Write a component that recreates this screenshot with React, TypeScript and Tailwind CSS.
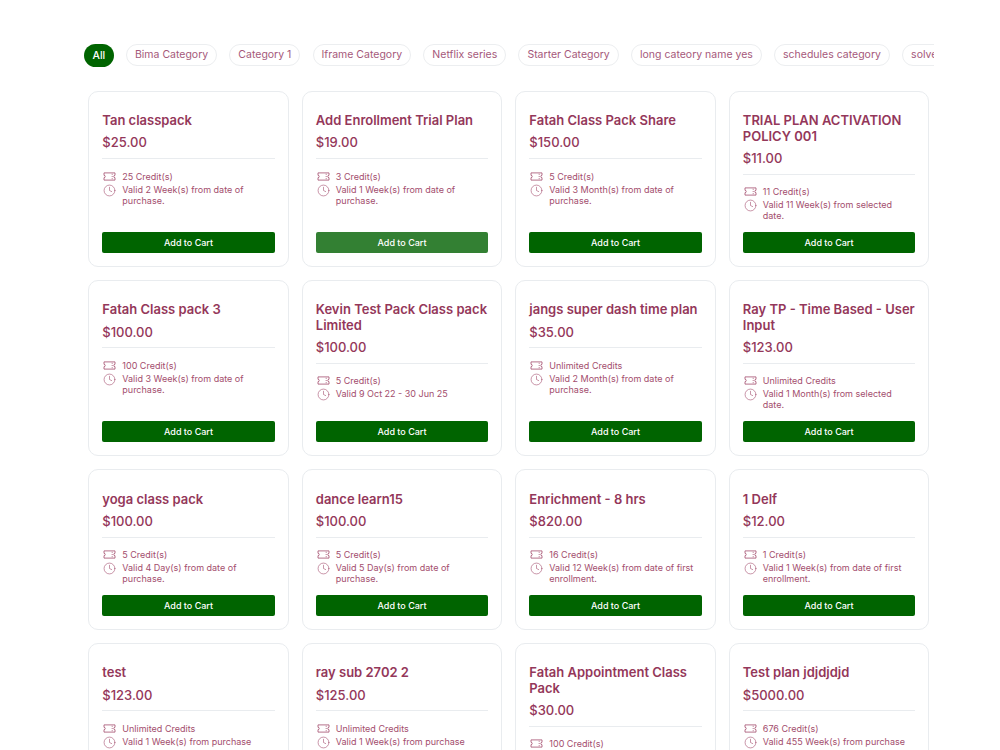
import { Clock } from "lucide-react";

interface Plan {
  name: string;
  price: string;
  credits: string;
  valid: string;
  hover?: boolean;
}

const CATEGORIES = [
  "Bima Category",
  "Category 1",
  "Iframe Category",
  "Netflix series",
  "Starter Category",
  "long cateory name yes",
  "schedules category",
  "solver category",
];

const PLANS: Plan[] = [
  { name: "Tan classpack", price: "$25.00", credits: "25 Credit(s)", valid: "Valid 2 Week(s) from date of purchase." },
  { name: "Add Enrollment Trial Plan", price: "$19.00", credits: "3 Credit(s)", valid: "Valid 1 Week(s) from date of purchase.", hover: true },
  { name: "Fatah Class Pack Share", price: "$150.00", credits: "5 Credit(s)", valid: "Valid 3 Month(s) from date of purchase." },
  { name: "TRIAL PLAN ACTIVATION POLICY 001", price: "$11.00", credits: "11 Credit(s)", valid: "Valid 11 Week(s) from selected date." },
  { name: "Fatah Class pack 3", price: "$100.00", credits: "100 Credit(s)", valid: "Valid 3 Week(s) from date of purchase." },
  { name: "Kevin Test Pack Class pack Limited", price: "$100.00", credits: "5 Credit(s)", valid: "Valid 9 Oct 22 - 30 Jun 25" },
  { name: "jangs super dash time plan", price: "$35.00", credits: "Unlimited Credits", valid: "Valid 2 Month(s) from date of purchase." },
  { name: "Ray TP - Time Based - User Input", price: "$123.00", credits: "Unlimited Credits", valid: "Valid 1 Month(s) from selected date." },
  { name: "yoga class pack", price: "$100.00", credits: "5 Credit(s)", valid: "Valid 4 Day(s) from date of purchase." },
  { name: "dance learn15", price: "$100.00", credits: "5 Credit(s)", valid: "Valid 5 Day(s) from date of purchase." },
  { name: "Enrichment - 8 hrs", price: "$820.00", credits: "16 Credit(s)", valid: "Valid 12 Week(s) from date of first enrollment." },
  { name: "1 Delf", price: "$12.00", credits: "1 Credit(s)", valid: "Valid 1 Week(s) from date of first enrollment." },
  { name: "test", price: "$123.00", credits: "Unlimited Credits", valid: "Valid 1 Week(s) from purchase" },
  { name: "ray sub 2702 2", price: "$125.00", credits: "Unlimited Credits", valid: "Valid 1 Week(s) from purchase" },
  { name: "Fatah Appointment Class Pack", price: "$30.00", credits: "100 Credit(s)", valid: "Valid 1 Week(s) from purchase" },
  { name: "Test plan jdjdjdjd", price: "$5000.00", credits: "676 Credit(s)", valid: "Valid 455 Week(s) from purchase" },
];

function TicketIcon() {
  return (
    <svg width="13" height="9" viewBox="0 0 13 9" fill="none" stroke="currentColor" strokeWidth="0.8" className="ml-[1px] shrink-0">
      <path d="M1 .9h11v2.4a1.2 1.2 0 0 0 0 2.4v2.4H1V5.7a1.2 1.2 0 0 0 0-2.4z" />
      <path d="M9.2 1.8v1M9.2 4v1M9.2 6.2v1" />
    </svg>
  );
}

function PlanCard({ plan }: { plan: Plan }) {
  return (
    <div className="flex flex-col rounded-[10px] border border-[#e9ecef] bg-white px-[13px] pt-[21.2px] pb-[13.3px]">
      <h3 className="text-[13px] leading-[15.6px] font-semibold text-[#94375a]">{plan.name}</h3>
      <p className="mt-[6.7px] text-[13px] leading-[15.6px] font-medium text-[#94375a]">{plan.price}</p>
      <div className="mt-[7.1px] border-t border-[#e9ecef]" />
      <div className="mt-[11.5px] flex items-center gap-[6px] text-[9px] leading-[11px] text-[#a34d6d]">
        <TicketIcon />
        <span>{plan.credits}</span>
      </div>
      <div className="mt-[2px] flex items-start gap-[6px] pb-[10.7px] text-[9px] leading-[11px] text-[#a34d6d]">
        <Clock size={13} strokeWidth={1.1} className="ml-[1px] shrink-0" />
        <span className="pr-[2px]">{plan.valid}</span>
      </div>
      <button
        className={`mt-auto h-[21px] w-full rounded-[2px] text-[9px] font-medium text-white ${
          plan.hover ? "bg-[#338033]" : "bg-[#006400]"
        }`}
      >
        Add to Cart
      </button>
    </div>
  );
}

export default function App() {
  return (
    <div className="h-[750px] overflow-hidden bg-white pt-[44px] font-['Inter',sans-serif]">
      {/* Category chips */}
      <div className="ml-[84px] flex w-[850px] items-start gap-[12.2px] overflow-hidden">
        <button className="shrink-0 rounded-full bg-[#006400] px-[8.5px] py-[4px] text-[10.5px] leading-[15px] font-medium text-white">
          All
        </button>
        {CATEGORIES.map((c) => (
          <button
            key={c}
            className="shrink-0 rounded-full border border-[#eceef0] px-[8px] py-[3px] text-[10.5px] leading-[14px] text-[#a5587a]"
          >
            {c}
          </button>
        ))}
      </div>

      {/* Plans */}
      <div className="mt-[24px] ml-[88.3px] grid w-[841px] grid-cols-4 gap-[13px]">
        {PLANS.map((p) => (
          <PlanCard key={p.name} plan={p} />
        ))}
      </div>
    </div>
  );
}
